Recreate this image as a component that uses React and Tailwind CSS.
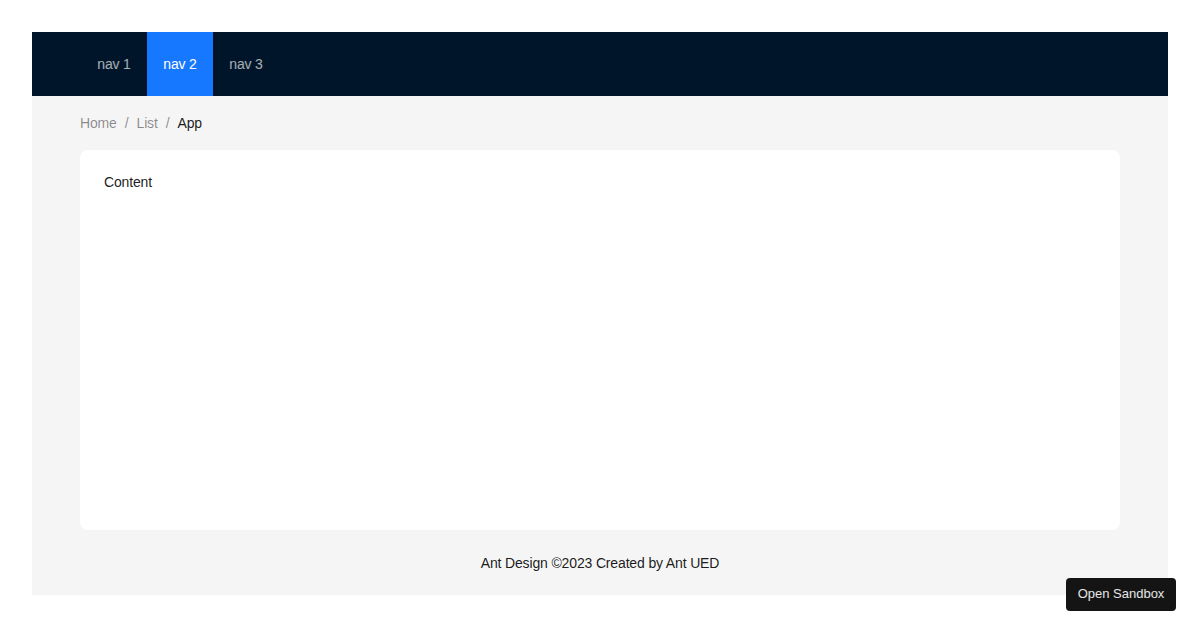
import React from 'react';

const navItems = ['nav 1', 'nav 2', 'nav 3'];

export default function App() {
  return (
    <div className="relative min-h-[630px] bg-white p-8 font-['Liberation_Sans',Arial,sans-serif] text-sm tracking-[-0.15px]">
      <div className="flex flex-col bg-[#f5f5f5]">
        <header className="flex h-16 items-center bg-[#001529] pl-[49px] pr-12">
          <nav className="flex h-full">
            {navItems.map((item, i) => (
              <div
                key={item}
                className={
                  i === 1
                    ? 'flex h-full w-[66px] items-center justify-center bg-[#1677ff] text-white'
                    : 'flex h-full w-[66px] items-center justify-center text-white/65'
                }
              >
                {item}
              </div>
            ))}
          </nav>
        </header>

        <main className="px-12">
          <div className="my-4 flex h-[22px] items-center leading-[22px]">
            <span className="text-black/45">Home</span>
            <span className="mx-2 text-black/45">/</span>
            <span className="text-black/45">List</span>
            <span className="mx-2 text-black/45">/</span>
            <span className="text-black/90">App</span>
          </div>
          <div className="h-[380px] rounded-lg bg-white px-6 pt-[21px] leading-[22px] text-black/90">
            Content
          </div>
        </main>

        <footer className="flex h-[65px] items-center justify-center leading-[22px] text-black/90">
          Ant Design ©2023 Created by Ant UED
        </footer>
      </div>

      <button className="absolute left-[1066px] top-[578px] h-[33px] w-[110px] rounded bg-[#141414] text-[13px] tracking-normal text-white/90">
        Open Sandbox
      </button>
    </div>
  );
}
